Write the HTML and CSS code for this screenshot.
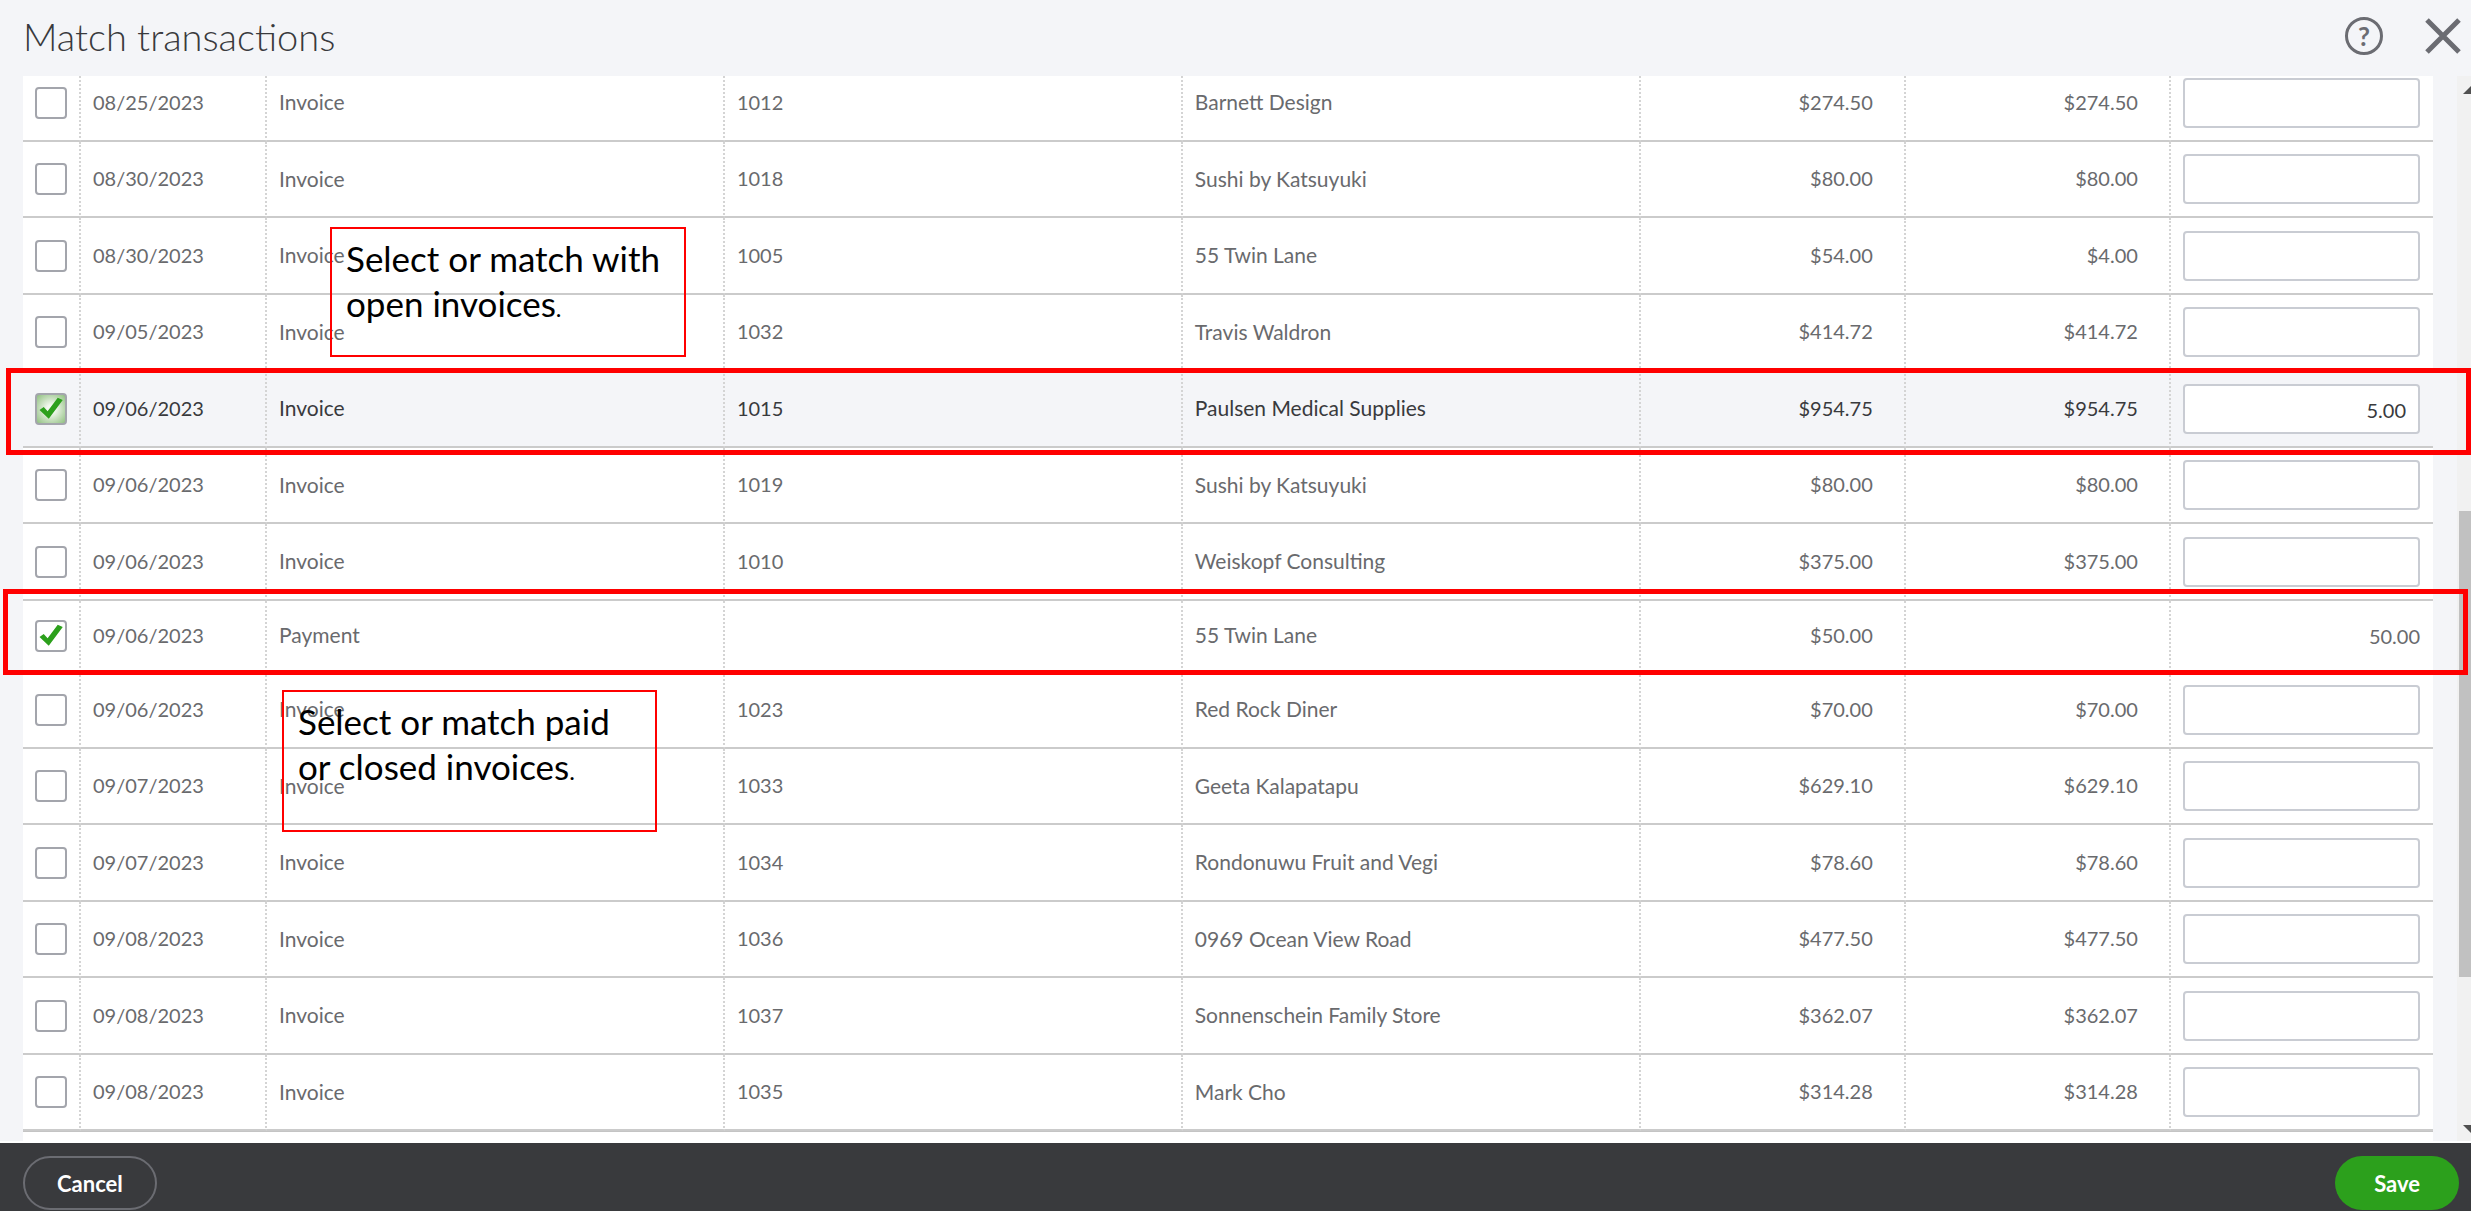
FILE: index.html
```html
<!DOCTYPE html>
<html lang="en">
<head>
    <meta charset="UTF-8">
    <meta name="viewport" content="width=device-width, initial-scale=1.0">
    <title>Match transactions</title>
    <link rel="stylesheet" href="styles.css">
</head>
<body>
    <header>
        <h1>Match transactions</h1>
        <div class="header-actions">
            <button type="button" class="help-btn" aria-label="Help">?</button>
            <button type="button" class="close-btn" aria-label="Close">
                <svg viewBox="0 0 36 36" width="36" height="36"><path d="M2 2L34 34M34 2L2 34" stroke="#6b6c72" stroke-width="5" fill="none"/></svg>
            </button>
        </div>
    </header>
    <main>
        <div class="table-area">
            <table class="match-table" id="matchTable">
                <colgroup>
                    <col class="col-check">
                    <col class="col-date">
                    <col class="col-text">
                    <col class="col-text">
                    <col class="col-text">
                    <col class="col-amount">
                    <col class="col-amount">
                    <col>
                </colgroup>
                <tbody></tbody>
            </table>
        </div>
        <div class="scrollbar">
            <svg class="arrow" viewBox="0 0 8 8" width="8" height="8"><path d="M0 8L8 0V8Z" fill="#505050"/></svg>
            <div class="thumb"></div>
            <svg class="arrow" viewBox="0 0 8 8" width="8" height="8"><path d="M0 0L8 8V0Z" fill="#505050"/></svg>
        </div>
    </main>
    <footer>
        <button type="button" class="cancel-btn">Cancel</button>
        <button type="button" class="save-btn">Save</button>
    </footer>

    <!-- Notes over the table -->
    <div class="outline outline-open"></div>
    <div class="outline outline-paid"></div>
    <p class="note note-open">Select or match with open invoices<span class="dot">.</span></p>
    <p class="note note-paid">Select or match paid<br>or closed invoices<span class="dot">.</span></p>

    <script>
        const transactions = [
            { date: '08/25/2023', type: 'Invoice', ref: '1012', name: 'Barnett Design', amount: '$274.50', open: '$274.50' },
            { date: '08/30/2023', type: 'Invoice', ref: '1018', name: 'Sushi by Katsuyuki', amount: '$80.00', open: '$80.00' },
            { date: '08/30/2023', type: 'Invoice', ref: '1005', name: '55 Twin Lane', amount: '$54.00', open: '$4.00' },
            { date: '09/05/2023', type: 'Invoice', ref: '1032', name: 'Travis Waldron', amount: '$414.72', open: '$414.72' },
            { date: '09/06/2023', type: 'Invoice', ref: '1015', name: 'Paulsen Medical Supplies', amount: '$954.75', open: '$954.75', payment: '5.00', checked: true, active: true },
            { date: '09/06/2023', type: 'Invoice', ref: '1019', name: 'Sushi by Katsuyuki', amount: '$80.00', open: '$80.00' },
            { date: '09/06/2023', type: 'Invoice', ref: '1010', name: 'Weiskopf Consulting', amount: '$375.00', open: '$375.00' },
            { date: '09/06/2023', type: 'Payment', ref: '', name: '55 Twin Lane', amount: '$50.00', open: '', payment: '50.00', checked: true, paid: true },
            { date: '09/06/2023', type: 'Invoice', ref: '1023', name: 'Red Rock Diner', amount: '$70.00', open: '$70.00' },
            { date: '09/07/2023', type: 'Invoice', ref: '1033', name: 'Geeta Kalapatapu', amount: '$629.10', open: '$629.10' },
            { date: '09/07/2023', type: 'Invoice', ref: '1034', name: 'Rondonuwu Fruit and Vegi', amount: '$78.60', open: '$78.60' },
            { date: '09/08/2023', type: 'Invoice', ref: '1036', name: '0969 Ocean View Road', amount: '$477.50', open: '$477.50' },
            { date: '09/08/2023', type: 'Invoice', ref: '1037', name: 'Sonnenschein Family Store', amount: '$362.07', open: '$362.07' },
            { date: '09/08/2023', type: 'Invoice', ref: '1035', name: 'Mark Cho', amount: '$314.28', open: '$314.28' }
        ];
        const tbody = document.querySelector('#matchTable tbody');

        transactions.forEach(t => {
            const row = tbody.insertRow();
            if (t.active) row.classList.add('active');
            if (t.paid) row.classList.add('paid');
            const label = `${t.type} ${t.ref} ${t.name}`;
            // payments already applied can't be edited
            const payment = t.paid
                ? t.payment
                : `<input type="text" class="payment" aria-label="Payment for ${label}" value="${t.payment || ''}">`;
            row.innerHTML = `
                <td class="check"><input type="checkbox" aria-label="Select ${label}" ${t.checked ? 'checked' : ''}></td>
                <td>${t.date}</td>
                <td class="text">${t.type}</td>
                <td>${t.ref}</td>
                <td class="text">${t.name}</td>
                <td class="amount">${t.amount}</td>
                <td class="amount">${t.open}</td>
                <td class="payment-cell">${payment}</td>
            `;
        });
    </script>
</body>
</html>
```

FILE: styles.css
```css
* {
    margin: 0;
    padding: 0;
    box-sizing: border-box;
}
body {
    position: relative;
    display: flex;
    flex-direction: column;
    height: 100vh;
    overflow: hidden;
    font-family: Lato, "Open Sans", sans-serif;
    font-size: 20px;
    background-color: #f4f5f8;
    color: #696a6d;
}
button {
    font-family: inherit;
    cursor: pointer;
}
header {
    display: flex;
    align-items: center;
    justify-content: space-between;
    height: 76px;
    padding: 0 10px 4px 23px;
    flex-shrink: 0;
}
header h1 {
    font-size: 38px;
    font-weight: 300;
    color: #393a3d;
}
.header-actions {
    display: flex;
    align-items: center;
    gap: 42px;
}
.help-btn {
    width: 38px;
    height: 38px;
    border: 3px solid #6b6c72;
    border-radius: 50%;
    background: none;
    color: #6b6c72;
    font-size: 26px;
    font-weight: 700;
    line-height: 30px;
}
.close-btn {
    display: flex;
    border: none;
    background: none;
}
main {
    display: flex;
    flex: 1;
    min-height: 0;
    padding-left: 23px;
}
.table-area {
    flex: 1;
    margin-right: 24px;
    overflow: hidden;
    background-color: #fff;
}
.match-table {
    width: 100%;
    margin-top: -11px;
    table-layout: fixed;
    border-collapse: separate;
    border-spacing: 0;
    border-bottom: 1px solid #c4c4c4;
}
.col-check {
    width: 58px;
}
.col-date {
    width: 186px;
}
.col-text {
    width: 19%;
}
.col-amount {
    width: 11%;
}
.match-table td {
    height: 77px;
    padding: 0 12px 2px;
    border-right: 2px dotted #d4d4d4;
    border-bottom: 2px solid #cbcbcb;
    white-space: nowrap;
}
.match-table tr:nth-child(even) td {
    height: 76px;
}
.match-table tr.paid td {
    height: 71px;
}
.match-table td:last-child {
    border-right: none;
}
.match-table td.text {
    font-size: 21px;
}
.match-table td.check {
    padding: 0 0 0 12px;
}
.match-table td.amount {
    padding-right: 31px;
    text-align: right;
}
.match-table td.payment-cell {
    padding: 0 13px 0 12px;
    text-align: right;
}
.match-table tr.active td {
    background-color: #f4f5f8;
    color: #393a3d;
}
input[type="checkbox"] {
    display: block;
    appearance: none;
    width: 32px;
    height: 32px;
    border: 2px solid #a3a5ac;
    border-radius: 4px;
    background-color: #fff;
}
input[type="checkbox"]:checked::after {
    content: "";
    display: block;
    width: 28px;
    height: 28px;
    background-color: #2ca01c;
    clip-path: polygon(9% 55%, 24% 45%, 38% 60%, 74% 12%, 92% 20%, 42% 87%);
}
.active input[type="checkbox"] {
    background: radial-gradient(circle, #f3f8f0 20%, #8fc07f 100%);
}
.payment {
    display: block;
    width: 100%;
    height: 50px;
    padding: 2px 12px 0;
    border: 2px solid #c9ccd3;
    border-radius: 4px;
    background-color: #fff;
    font-family: inherit;
    font-size: 20px;
    text-align: right;
    color: #393a3d;
}
.scrollbar {
    display: flex;
    flex-direction: column;
    align-items: flex-end;
    width: 14px;
    padding: 10px 0 8px;
    background-color: #f1f1f1;
}
.thumb {
    width: 12px;
    height: 466px;
    margin: 417px 0 auto;
    background-color: #c1c1c1;
}
footer {
    display: flex;
    align-items: center;
    justify-content: space-between;
    height: 70px;
    padding: 12px 12px 0 23px;
    border-top: 2px solid #fff;
    background-color: #393a3d;
    flex-shrink: 0;
}
footer button {
    height: 54px;
    border-radius: 27px;
    font-size: 22px;
    font-weight: 700;
    color: #fff;
}
.cancel-btn {
    padding: 0 32px;
    border: 2px solid #6b6c72;
    background: none;
}
.save-btn {
    padding: 0 39px;
    border: none;
    background-color: #2ca01c;
}
.outline {
    position: absolute;
    border: 5px solid #ff0000;
    pointer-events: none;
}
.outline-open {
    top: 368px;
    left: 6px;
    right: 0;
    height: 87px;
}
.outline-paid {
    top: 589px;
    left: 3px;
    right: 3px;
    height: 86px;
}
.note {
    position: absolute;
    padding: 7px 14px;
    border: 2px solid #ff0000;
    font-size: 35px;
    line-height: 45px;
    color: #000;
}
.note-open {
    top: 227px;
    left: 330px;
    width: 356px;
    height: 130px;
}
.note-paid {
    top: 690px;
    left: 282px;
    width: 375px;
    height: 142px;
}
.dot {
    font-size: 24px;
}
```
